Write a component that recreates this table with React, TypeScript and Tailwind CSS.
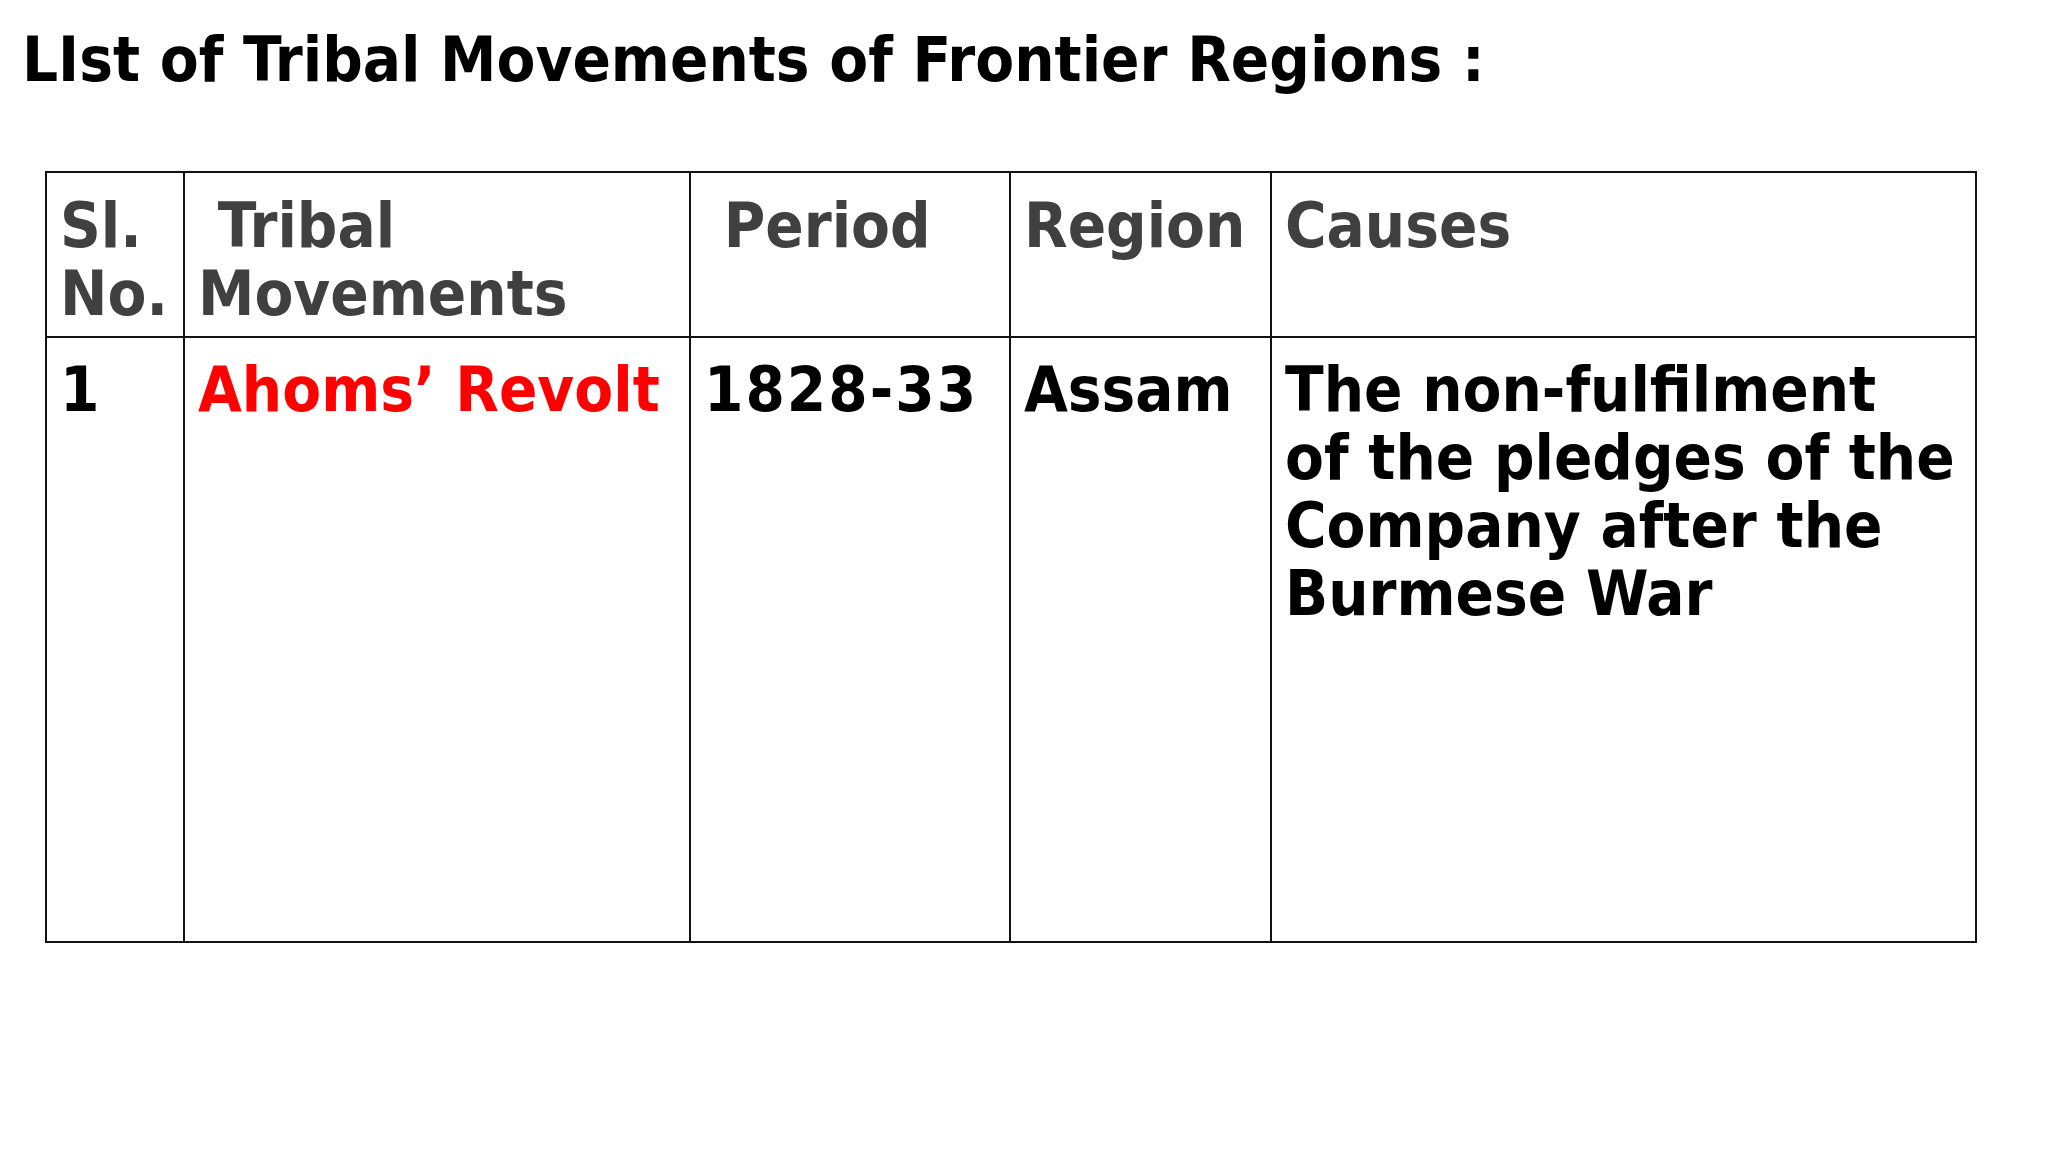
import React from 'react';

const headCell = 'bg-white pl-[13px] pt-[19px] text-[#404040]';
const bodyCell = 'bg-white pl-[13px] pt-[18px] text-black';

export default function App() {
  return (
    <div className="min-h-[1152px] w-[2048px] bg-white font-['DejaVu_Sans_Condensed','DejaVu_Sans',sans-serif] font-bold text-[63px] leading-[68px]">
      <h1 className="pl-[22px] pt-[26px] text-black">LIst of Tribal Movements of Frontier Regions :</h1>

      <div className="ml-[45px] mt-[77px] inline-grid grid-cols-[136px_504px_318px_259px_703px] grid-rows-[163px_603px] gap-[2px] bg-[#111] p-[2px]">
        <div className={headCell}>
          Sl.
          <br />
          No.
        </div>
        <div className={headCell}>
          {'\u00a0'}Tribal
          <br />
          Movements
        </div>
        <div className={headCell}>{'\u00a0'}Period</div>
        <div className={headCell}>Region</div>
        <div className={headCell}>Causes</div>

        <div className={bodyCell}>1</div>
        <div className={bodyCell + ' !text-[#ff0000]'}>Ahoms’ Revolt</div>
        <div className={bodyCell + ' tracking-[2px]'}>1828-33</div>
        <div className={bodyCell}>Assam</div>
        <div className={bodyCell}>
          The non-fulfilment
          <br />
          of the pledges of the
          <br />
          Company after the
          <br />
          Burmese War
        </div>
      </div>
    </div>
  );
}
